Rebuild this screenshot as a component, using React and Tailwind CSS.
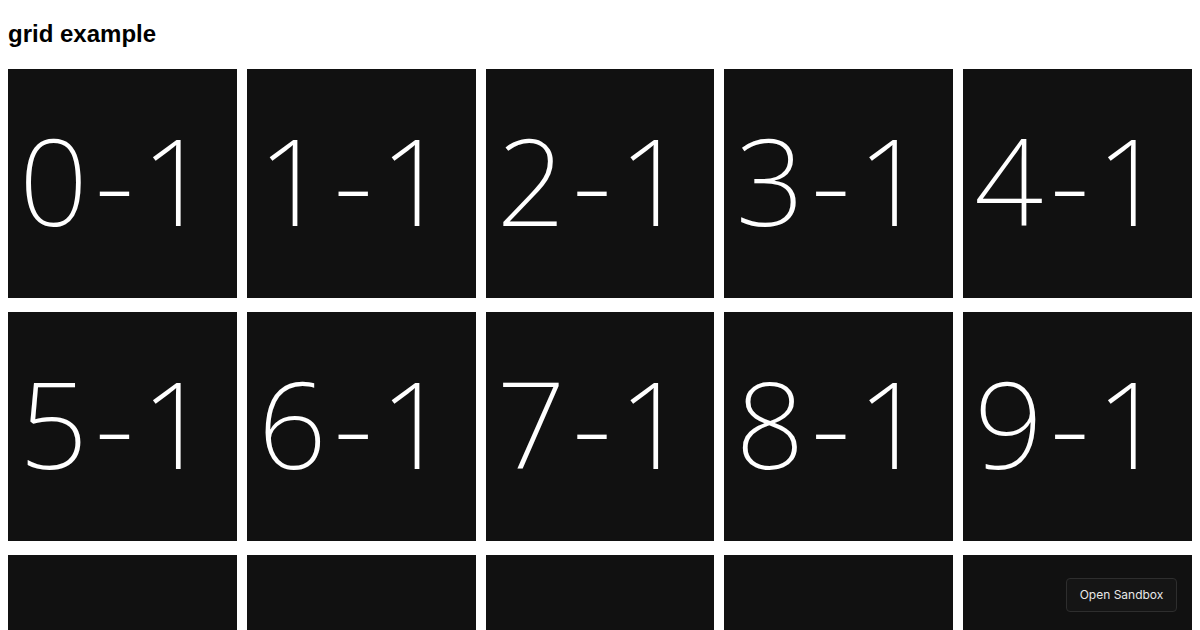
import React from "react";

// first two rows carry a label, the third row is still empty
const tiles = Array.from({ length: 15 }, (_, i) => (i < 10 ? `${i}-1` : ""));

export default function App() {
  return (
    <div className="min-h-screen bg-white px-2 font-['Liberation_Sans',Arial,sans-serif] text-black">
      <h2 className="pt-[20px] mb-[21px] text-[24px] leading-[28px] font-bold">
        grid example
      </h2>

      <div className="grid grid-cols-5 gap-x-[10px] gap-y-[14px]">
        {tiles.map((label, i) => (
          <div
            key={i}
            className="aspect-square bg-[#111111] flex items-center justify-start pl-[11px] pb-[7px] overflow-hidden"
          >
            <span className="font-['Noto_Sans','Open_Sans',sans-serif] font-extralight text-[121px] leading-none tracking-[7px] text-white whitespace-nowrap">
              {label}
            </span>
          </div>
        ))}
      </div>

      <button className="fixed bottom-[18px] right-[23px] h-[34px] w-[111px] rounded-[4px] border border-[#2e2e2e] bg-[#151515] text-[12px] text-[#e8e8e8] font-['Inter',sans-serif]">
        Open Sandbox
      </button>
    </div>
  );
}
